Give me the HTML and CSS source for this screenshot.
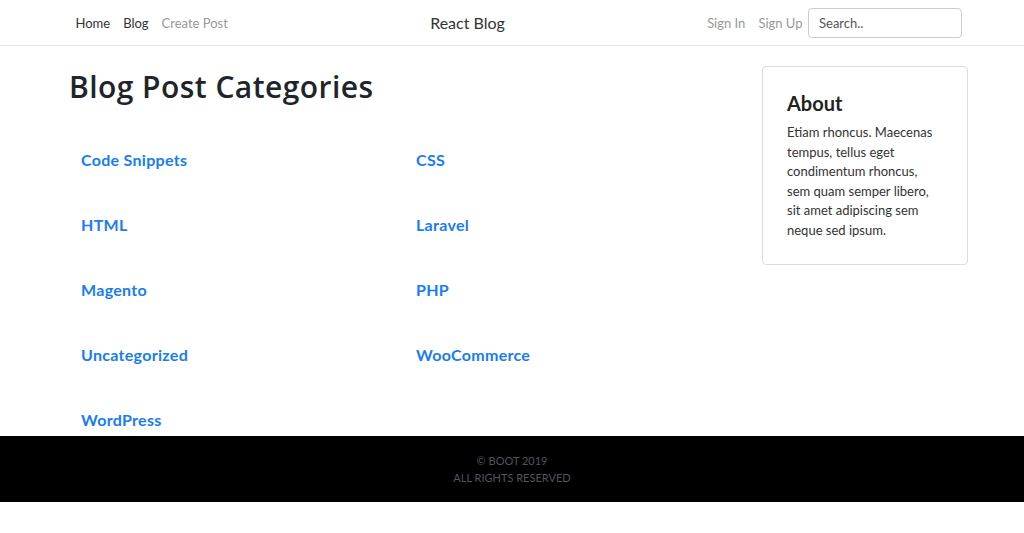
FILE: index.html
```html
<!DOCTYPE html>
<html lang="en">
<head>
<meta charset="utf-8">
<title>React Blog</title>
<link rel="stylesheet" href="styles.css">
</head>
<body>
<header class="navbar">
  <nav class="nav-left">
    <a class="nav-link dark" href="#">Home</a>
    <a class="nav-link dark" href="#">Blog</a>
    <a class="nav-link muted" href="#">Create Post</a>
  </nav>
  <div class="brand">React Blog</div>
  <div class="nav-right">
    <a class="nav-link muted" href="#">Sign In</a>
    <a class="nav-link muted" href="#">Sign Up</a>
    <input class="search" type="text" placeholder="Search..">
  </div>
</header>
<main class="main">
  <section class="content">
    <h1 class="title">Blog Post Categories</h1>
    <div class="cat-grid">
      <a class="cat" href="#">Code Snippets</a>
      <a class="cat" href="#">CSS</a>
      <a class="cat" href="#">HTML</a>
      <a class="cat" href="#">Laravel</a>
      <a class="cat" href="#">Magento</a>
      <a class="cat" href="#">PHP</a>
      <a class="cat" href="#">Uncategorized</a>
      <a class="cat" href="#">WooCommerce</a>
      <a class="cat" href="#">WordPress</a>
    </div>
  </section>
  <aside class="sidebar">
    <div class="card">
      <h4 class="card-title">About</h4>
      <p class="card-text">Etiam rhoncus. Maecenas tempus, tellus eget condimentum rhoncus, sem quam semper libero, sit amet adipiscing sem neque sed ipsum.</p>
    </div>
  </aside>
</main>
<footer class="footer">
  <div>© BOOT 2019</div>
  <div>ALL RIGHTS RESERVED</div>
</footer>
</body>
</html>
```
FILE: styles.css
```css
* { box-sizing: border-box; }
body {
  margin: 0;
  font-family: Lato, "Open Sans", sans-serif;
  color: #212529;
  background: #fff;
}
.navbar {
  height: 46px;
  border-bottom: 1px solid #e6e6e6;
  display: flex;
  align-items: center;
  justify-content: space-between;
  padding: 0 62px 0 69px;
}
.nav-left, .nav-right {
  display: flex;
  align-items: center;
}
.nav-link {
  font-size: 13px;
  padding: 0 6.5px;
  text-decoration: none;
  line-height: 20px;
}
.nav-link.dark { color: #333; }
.nav-link.muted { color: #999; }
.brand {
  font-size: 16px;
  color: #333;
}
.search {
  width: 154px;
  height: 30px;
  margin-left: -1px;
  border: 1px solid #ccc;
  border-radius: 4px;
  padding: 0 10px;
  font-family: inherit;
  font-size: 13px;
  color: #555;
}
.search::placeholder { color: #555; }
.main {
  display: flex;
  padding: 20px 0 0 68px;
  gap: 24px;
}
.content {
  width: 670px;
}
.title {
  margin: 4px 0 0 1px;
  font-family: "Open Sans", Lato, sans-serif;
  font-size: 30px;
  font-weight: 600;
  letter-spacing: 0.45px;
  line-height: 34px;
  color: #212529;
}
.cat-grid {
  display: grid;
  grid-template-columns: 335px 335px;
  row-gap: 41px;
  margin-top: 44px;
  padding-bottom: 4px;
}
.cat {
  padding-left: 13px;
  font-size: 16px;
  font-weight: 700;
  letter-spacing: 0.3px;
  line-height: 24px;
  color: #1a7cf5;
  text-decoration: none;
}
.sidebar {
  width: 206px;
}
.card {
  border: 1px solid #dcdcdc;
  border-radius: 4px;
  padding: 24px;
}
.card-title {
  margin: 0 0 8px;
  font-size: 20px;
  font-weight: 700;
  line-height: 24px;
  color: #222;
}
.card-text {
  margin: 0;
  font-size: 13px;
  line-height: 19.5px;
  color: #333;
}
.footer {
  background: #000;
  color: #50555c;
  text-align: center;
  font-size: 11px;
  line-height: 17px;
  padding: 16px 0;
}
```
